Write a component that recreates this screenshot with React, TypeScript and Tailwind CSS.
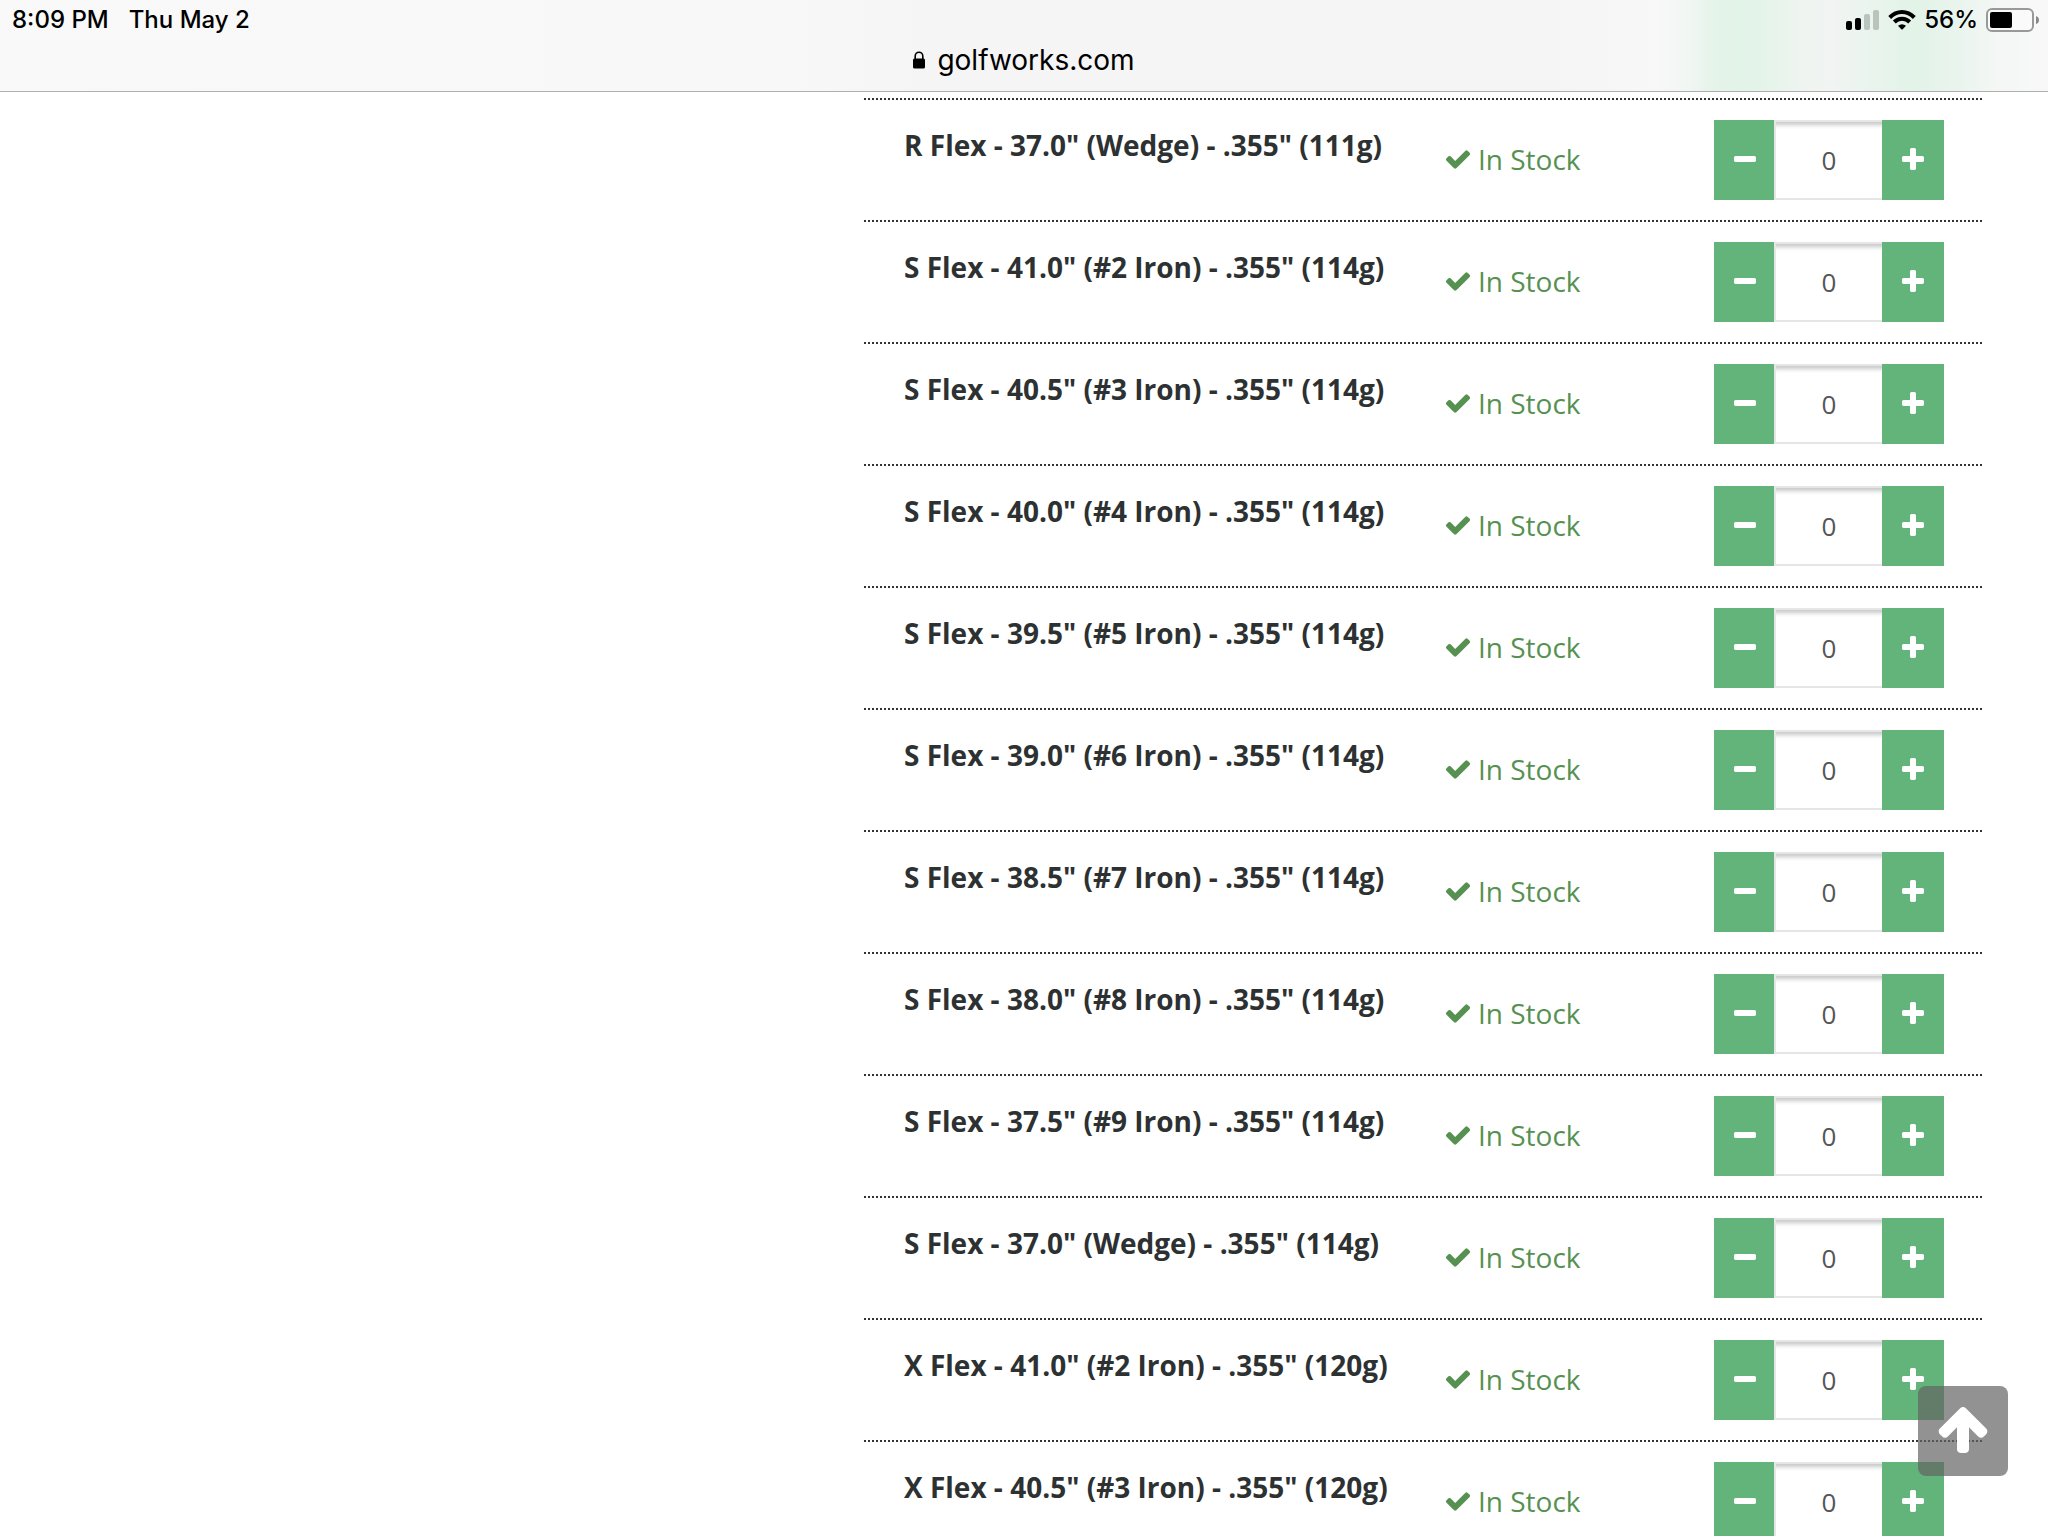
import { useState } from "react";

const PRODUCTS = [
  'R Flex - 37.0" (Wedge) - .355" (111g)',
  'S Flex - 41.0" (#2 Iron) - .355" (114g)',
  'S Flex - 40.5" (#3 Iron) - .355" (114g)',
  'S Flex - 40.0" (#4 Iron) - .355" (114g)',
  'S Flex - 39.5" (#5 Iron) - .355" (114g)',
  'S Flex - 39.0" (#6 Iron) - .355" (114g)',
  'S Flex - 38.5" (#7 Iron) - .355" (114g)',
  'S Flex - 38.0" (#8 Iron) - .355" (114g)',
  'S Flex - 37.5" (#9 Iron) - .355" (114g)',
  'S Flex - 37.0" (Wedge) - .355" (114g)',
  'X Flex - 41.0" (#2 Iron) - .355" (120g)',
  'X Flex - 40.5" (#3 Iron) - .355" (120g)',
];

const ICONS = {
  check:
    "M1671 566q0 40-28 68l-724 724-136 136q-28 28-68 28t-68-28l-136-136-362-362q-28-28-28-68t28-68l136-136q28-28 68-28t68 28l294 295 656-657q28-28 68-28t68 28l136 136q28 28 28 68z",
  plus: "M1600 736v192q0 40-28 68t-68 28h-416v416q0 40-28 68t-68 28h-192q-40 0-68-28t-28-68v-416h-416q-40 0-68-28t-28-68v-192q0-40 28-68t68-28h416v-416q0-40 28-68t68-28h192q40 0 68 28t28 68v416h416q40 0 68 28t28 68z",
  minus:
    "M1600 736v192q0 40-28 68t-68 28h-1216q-40 0-68-28t-28-68v-192q0-40 28-68t68-28h1216q40 0 68 28t28 68z",
  arrowUp:
    "M1675 971q0 51-37 90l-75 75q-38 38-91 38-54 0-90-38l-294-293v704q0 52-37.500 84.500t-90.500 32.500h-128q-53 0-90.500-32.500t-37.500-84.500v-704l-294 293q-36 38-90 38t-90-38l-75-75q-38-38-38-90 0-53 38-91l651-651q35-37 90-37 54 0 91 37l651 651q37 39 37 91z",
};

function Icon({ name, className }: { name: keyof typeof ICONS; className: string }) {
  return (
    <svg viewBox="0 0 1792 1792" fill="currentColor" className={className} aria-hidden="true">
      <path d={ICONS[name]} />
    </svg>
  );
}

function StatusBar() {
  return (
    <div className="flex h-10 items-center justify-between pr-2 pl-3 text-2xl text-black">
      <div className="flex gap-5 font-medium">
        <span>8:09 PM</span>
        <span>Thu May 2</span>
      </div>
      <div className="flex items-center gap-2">
        <svg viewBox="0 0 34 22" className="h-[22px] w-[34px]" aria-label="Cellular signal">
          <rect x="0" y="12" width="6" height="9" rx="2" />
          <rect x="9" y="9" width="6" height="12" rx="2" />
          <rect x="18" y="5" width="6" height="16" rx="2" fill="#bac4be" />
          <rect x="27" y="1" width="6" height="20" rx="2" fill="#bac4be" />
        </svg>
        <svg viewBox="0 0 28 20" className="h-5 w-7" aria-label="Wi-Fi">
          <g fill="none" stroke="#000" strokeWidth="4">
            <path d="M1.700 7.500Q7 2 14 2T26.300 7.500" />
            <path d="M6.300 12Q9.500 8.700 14 8.700T21.700 12" />
          </g>
          <path d="M10 15.700Q14 12.600 18 15.700L14.700 19.200Q14 19.900 13.300 19.200Z" />
        </svg>
        <span className="font-medium">56%</span>
        <svg viewBox="0 0 54 24" className="h-6 w-[54px]" aria-label="Battery">
          <rect x="1" y="1" width="46" height="22" rx="5" fill="#fafafa" stroke="#999" strokeWidth="2" />
          <rect x="4" y="4" width="22" height="16" rx="2" />
          <path d="M50 8q3 1 3 4t-3 4z" fill="#888" />
        </svg>
      </div>
    </div>
  );
}

function BrowserBar() {
  return (
    <header className="h-[92px] shrink-0 border-b border-[#afafaf] bg-[linear-gradient(90deg,#f9f9f9_0%,#f8f8f8_39%,#f5f5f5_45%,#f5f5f5_76%,#f7f8f7_81%,#f1f6f3_82.500%,#e6f4ea_83.500%,#e2f3e8_85%,#e6f4ea_86.500%,#eff4f1_88%,#f1f4f2_89.500%,#e9f4ed_91.500%,#e2f3e8_93.500%,#e9f4ed_95.500%,#f4f7f5_97.500%,#f8f8f8_100%)] font-['Inter','Liberation_Sans',sans-serif]">
      <StatusBar />
      <div className="flex h-10 items-center justify-center gap-3 text-[28px] text-black">
        <svg viewBox="0 0 12 18" className="h-[18px] w-3" aria-hidden="true">
          <path d="M2.200 8V5.200a3.800 4 0 0 1 7.600 0V8" fill="none" stroke="#000" strokeWidth="1.600" />
          <rect y="7.500" width="12" height="10" rx="1.500" />
        </svg>
        <span>golfworks.com</span>
      </div>
    </header>
  );
}

function QuantityStepper({ product }: { product: string }) {
  const [quantity, setQuantity] = useState(0);
  return (
    <div className="flex h-20">
      <button
        type="button"
        aria-label="Decrease quantity"
        onClick={() => setQuantity(Math.max(0, quantity - 1))}
        className="flex w-[62px] items-center justify-center bg-[#62b47a] text-white"
      >
        <Icon name="minus" className="size-7" />
      </button>
      <input
        type="text"
        inputMode="numeric"
        aria-label={`Quantity of ${product}`}
        value={quantity}
        onChange={(event) => setQuantity(Number(event.target.value) || 0)}
        className="relative -ml-0.5 w-[110px] border-2 border-[#e6e6e6] bg-white text-center text-[26px] text-[#555] shadow-[inset_0_7px_4px_-4px_rgba(0,0,0,0.22)]"
      />
      <button
        type="button"
        aria-label="Increase quantity"
        onClick={() => setQuantity(quantity + 1)}
        className="relative -ml-0.5 flex w-[62px] items-center justify-center bg-[#62b47a] text-white"
      >
        <Icon name="plus" className="size-7" />
      </button>
    </div>
  );
}

export default function App() {
  return (
    <div className="flex h-screen flex-col overflow-hidden bg-white font-['Open_Sans','Noto_Sans',sans-serif]">
      <BrowserBar />
      <main className="min-h-0 flex-1 overflow-hidden pt-1.5 pr-16 pl-[864px]">
        <table className="w-full table-fixed border-collapse text-[28px]">
          <colgroup>
            <col className="w-[580px]" />
            <col />
            <col className="w-[270px]" />
          </colgroup>
          <tbody>
            {PRODUCTS.map((product) => (
              <tr
                key={product}
                className="h-[122px] bg-[repeating-linear-gradient(90deg,#333_0_2px,transparent_2px_4px)] bg-[length:100%_2px] bg-no-repeat"
              >
                <th scope="row" className="pt-7 pl-10 text-left align-top leading-[38px] font-bold text-[#2d3132]">
                  {product}
                </th>
                <td className="text-[#579152]">
                  <span className="flex items-center gap-1.5">
                    <Icon name="check" className="size-7" />
                    In Stock
                  </span>
                </td>
                <td className="pt-0.5">
                  <QuantityStepper product={product} />
                </td>
              </tr>
            ))}
          </tbody>
        </table>
      </main>
      <button
        type="button"
        aria-label="Back to top"
        className="absolute right-10 bottom-[60px] flex size-[90px] items-center justify-center rounded-lg bg-[#646464]/70 pb-1 text-white"
      >
        <Icon name="arrowUp" className="size-14" />
      </button>
    </div>
  );
}
